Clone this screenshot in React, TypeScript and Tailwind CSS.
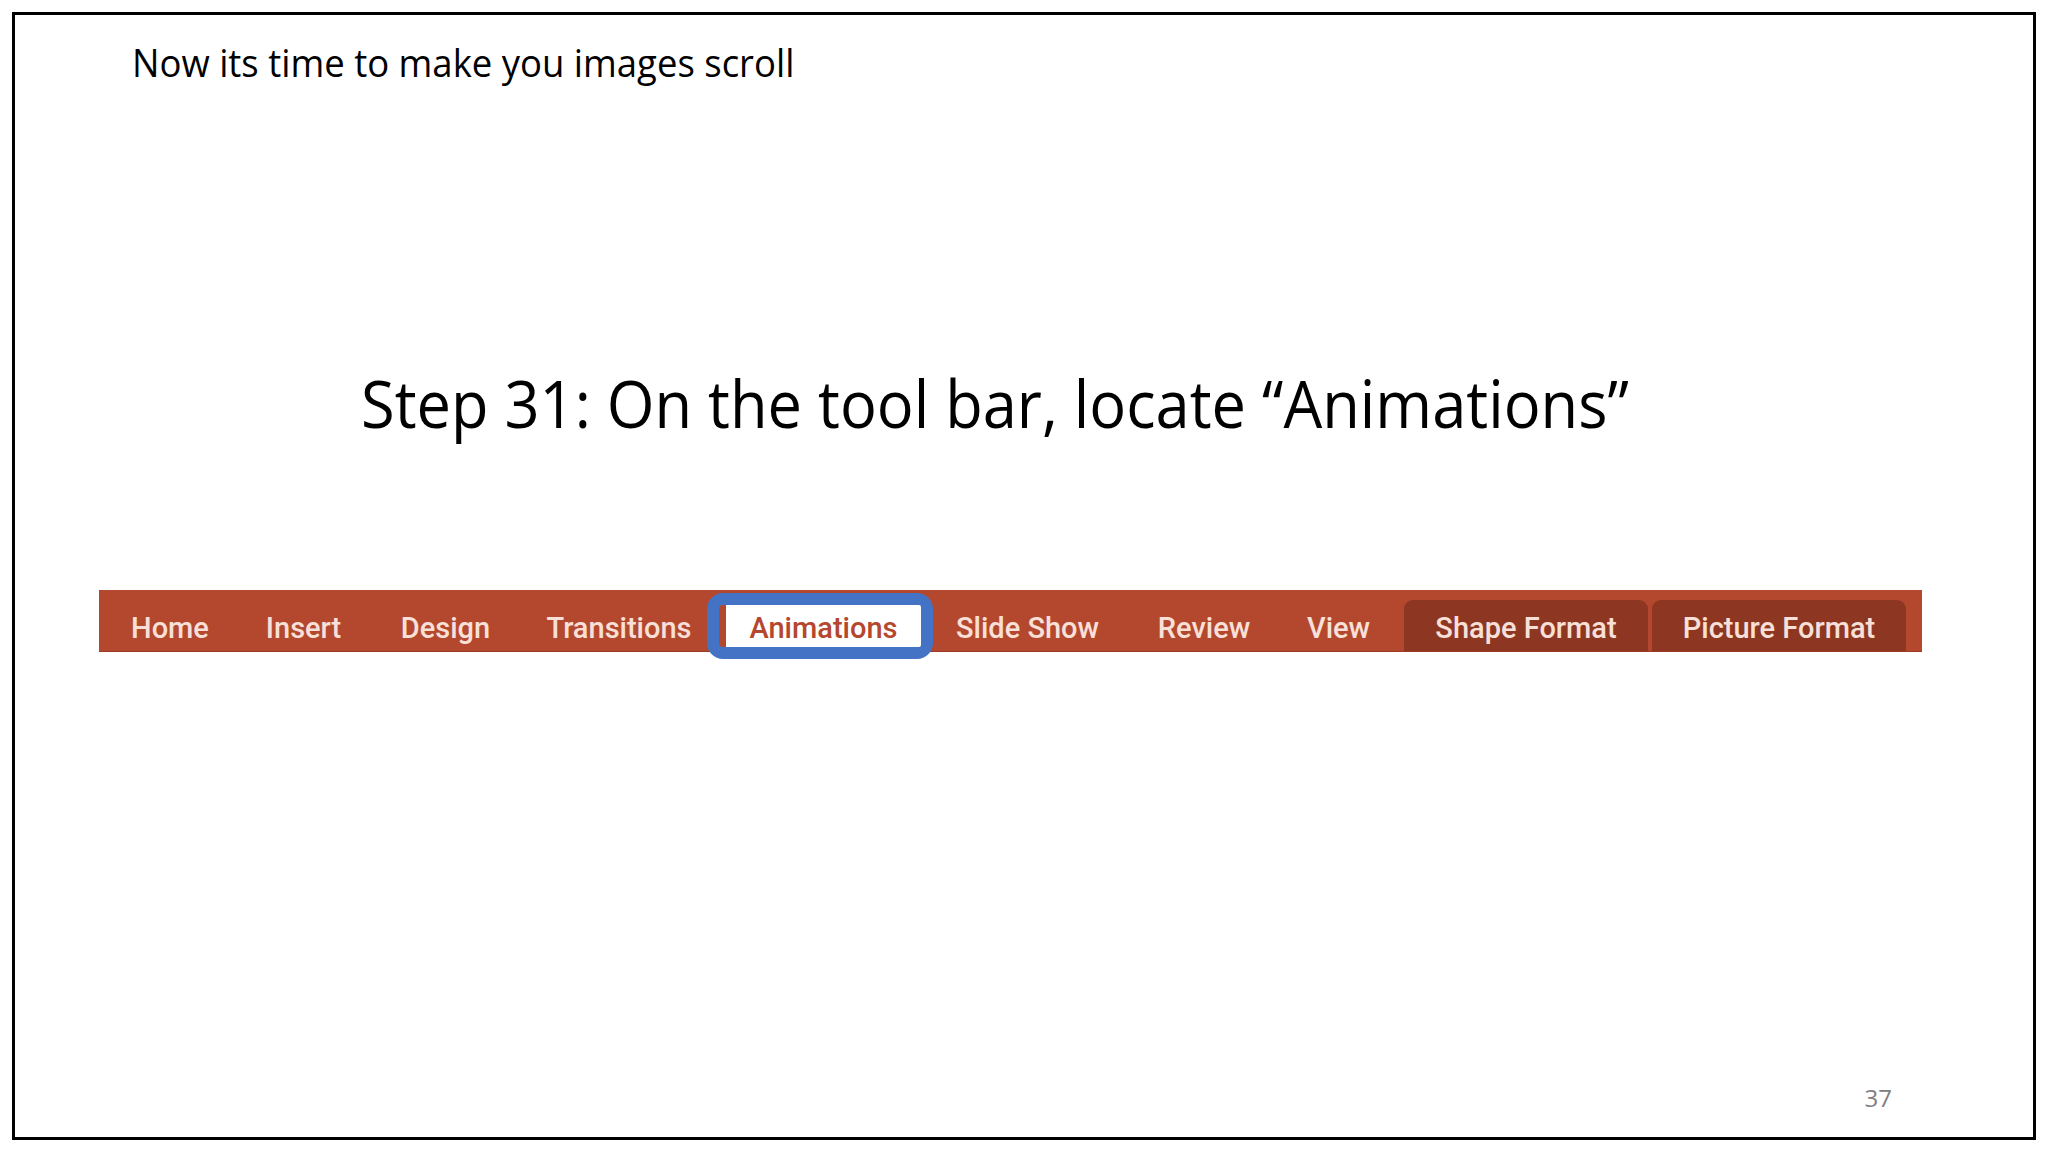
import React from 'react'

const tabs = [
  { label: 'Home', w: 'w-[142px]' },
  { label: 'Insert', w: 'w-[125px]' },
  { label: 'Design', w: 'w-[159px]' },
  { label: 'Transitions', w: 'w-[188px]' },
]

const tabsAfter = [
  { label: 'Slide Show', w: 'w-[189px]' },
  { label: 'Review', w: 'w-[164px]' },
  { label: 'View', w: 'w-[105px]' },
]

export default function App() {
  return (
    <div className="w-[2048px] h-[1152px] bg-white p-[12px]">
      <div className="h-full border-[3px] border-black flex flex-col">
        <div className="mt-[28px] ml-[117px] h-[38px] font-['Open_Sans',sans-serif] text-[38px] leading-none text-black origin-left scale-x-[0.96] whitespace-nowrap">
          Now its time to make you images scroll
        </div>

        <div className="mt-[288px] ml-[346px] h-[66px] font-['Open_Sans',sans-serif] text-[66px] leading-none text-black origin-left scale-x-[0.93] whitespace-nowrap">
          Step 31: On the tool bar, locate “Animations”
        </div>

        <div className="mt-[155px] ml-[84px] w-[1823px] h-[62px] flex bg-[#b3482e] border-b border-[#9c3c26] font-['Roboto',Arial,sans-serif] font-medium text-[29px] leading-none text-[#f8e0d8]">
          {tabs.map(t => (
            <div key={t.label} className={`${t.w} shrink-0 flex justify-center pt-[24px]`}>
              {t.label}
            </div>
          ))}

          <div className="w-[226px] h-[66px] -ml-[6px] mt-[3px] shrink-0 rounded-[16px] border-[12px] border-[#4472c4] bg-[#b3482e] flex">
            <div className="ml-[7px] flex-1 bg-white flex justify-center pt-[9px] text-[#b4472e] rounded-r-[2px]">
              Animations
            </div>
          </div>

          {tabsAfter.map(t => (
            <div key={t.label} className={`${t.w} shrink-0 flex justify-center pt-[24px]`}>
              {t.label}
            </div>
          ))}

          <div className="ml-[13px] w-[244px] shrink-0 mt-[10px] rounded-t-[9px] bg-[#8d3722] flex justify-center pt-[14px]">
            Shape Format
          </div>
          <div className="ml-[4px] w-[254px] shrink-0 mt-[10px] rounded-t-[9px] bg-[#8d3722] flex justify-center pt-[14px]">
            Picture Format
          </div>
        </div>

        <div className="mt-[434px] mr-[141px] flex justify-end font-['Open_Sans',sans-serif] text-[24px] leading-none text-[#808080]">
          37
        </div>
      </div>
    </div>
  )
}
